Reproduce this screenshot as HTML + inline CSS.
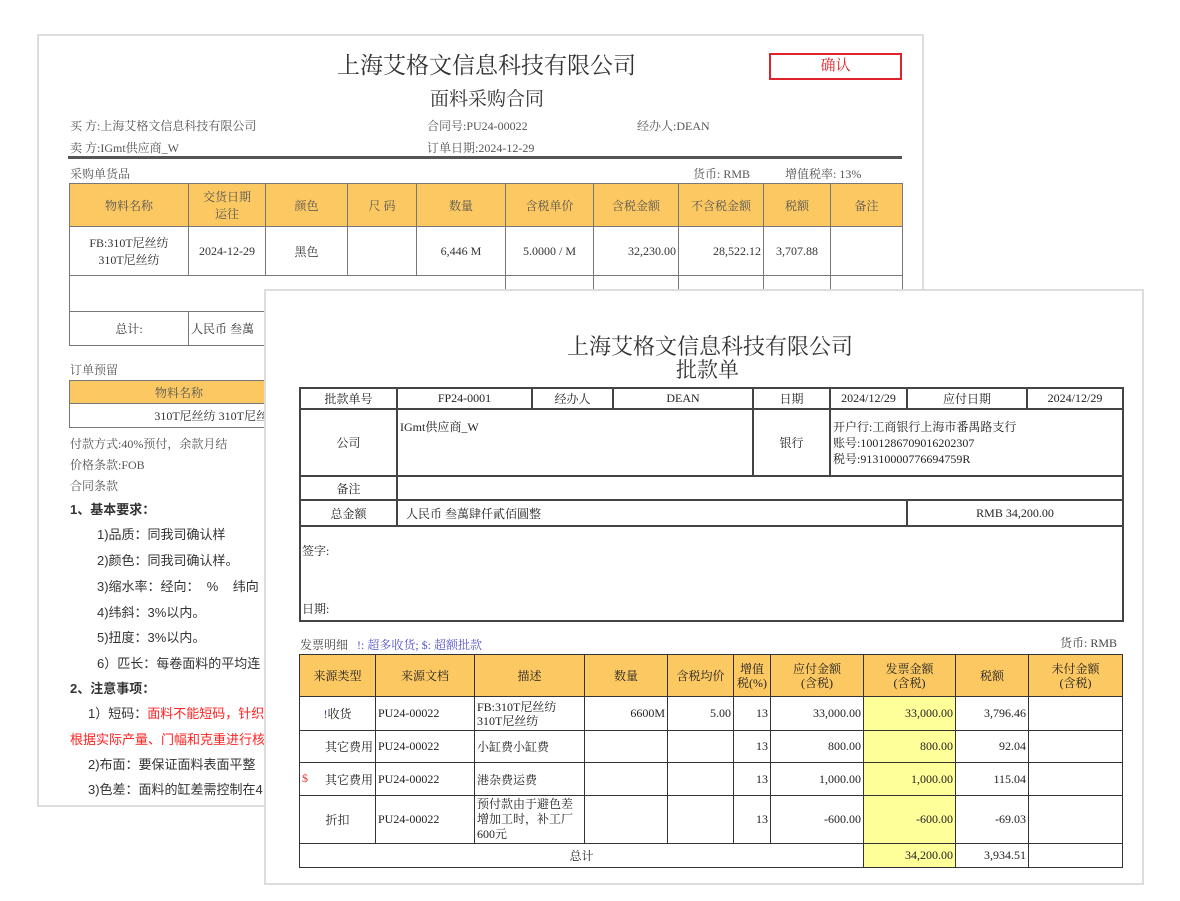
<!DOCTYPE html>
<html><head><meta charset="utf-8">
<style>
*{margin:0;padding:0;box-sizing:border-box}
body{width:1180px;height:901px;background:#fff;position:relative;overflow:hidden;font-family:"Liberation Serif","Noto Serif CJK SC",serif;color:#333}
.a{position:absolute;white-space:nowrap}
.doc{position:absolute;background:#fff;border:2px solid #ddd}
table{position:absolute;border-collapse:collapse;table-layout:fixed}
td{border:1px solid #777;text-align:center;font-size:12px;overflow:hidden;white-space:nowrap;padding:0 2px}
.h td{background:#fcc862;color:#555}
.bt td{border:2px solid #444;color:#222;font-size:12px}
.bt2 td{border:1.5px solid #333;color:#222;font-size:12px}
.r{text-align:right!important}
.l{text-align:left!important}
.y{background:#ffff99}
.s{font-size:12px;color:#555}
.k{font-family:"Liberation Sans","Noto Sans CJK SC",sans-serif;font-size:13px;color:#333}
</style></head><body>

<!-- back document -->
<div class="doc" style="left:37px;top:34px;width:887px;height:773px"></div>
<div class="a" style="left:337px;top:47px;font-size:23px;color:#333">上海艾格文信息科技有限公司</div>
<div class="a" style="left:430px;top:84px;font-size:19px;color:#333">面料采购合同</div>
<div class="a" style="left:769px;top:53px;width:133px;height:27px;border:2px solid #e0222a;color:#e0222a;text-align:center;font-size:15px;line-height:22px">确认</div>
<div class="a s" style="left:70px;top:117px">买 方:上海艾格文信息科技有限公司</div>
<div class="a s" style="left:427px;top:117px">合同号:PU24-00022</div>
<div class="a s" style="left:637px;top:117px">经办人:DEAN</div>
<div class="a s" style="left:70px;top:139px">卖 方:IGmt供应商_W</div>
<div class="a s" style="left:427px;top:139px">订单日期:2024-12-29</div>
<div class="a" style="left:68px;top:156px;width:834px;height:3px;background:#555"></div>
<div class="a s" style="left:70px;top:165px">采购单货品</div>
<div class="a s" style="left:693px;top:165px">货币: RMB</div>
<div class="a s" style="left:785px;top:165px">增值税率: 13%</div>

<table style="left:69px;top:183px;width:833px">
<colgroup><col style="width:119px"><col style="width:77px"><col style="width:82px"><col style="width:69px"><col style="width:89px"><col style="width:88px"><col style="width:85px"><col style="width:85px"><col style="width:67px"><col style="width:72px"></colgroup>
<tr class="h" style="height:43px"><td>物料名称</td><td>交货日期<br>运往</td><td>颜色</td><td>尺 码</td><td>数量</td><td>含税单价</td><td>含税金额</td><td>不含税金额</td><td>税额</td><td>备注</td></tr>
<tr style="height:49px"><td>FB:310T尼丝纺<br>310T尼丝纺</td><td>2024-12-29</td><td>黑色</td><td></td><td>6,446 M</td><td>5.0000 / M</td><td class="r">32,230.00</td><td class="r">28,522.12</td><td>3,707.88</td><td></td></tr>
<tr style="height:36px"><td colspan="5"></td><td></td><td></td><td></td><td></td><td></td></tr>
<tr style="height:34px"><td>总计:</td><td colspan="9" class="l">人民币 叁萬</td></tr>
</table>

<div class="a s" style="left:70px;top:361px">订单预留</div>
<table style="left:69px;top:380px;width:220px">
<tr class="h" style="height:23px"><td>物料名称</td></tr>
<tr style="height:24px"><td class="r" style="padding-right:8px">310T尼丝纺 310T尼丝纺</td></tr>
</table>
<div class="a s" style="left:70px;top:435px">付款方式:40%预付，余款月结</div>
<div class="a s" style="left:70px;top:456px">价格条款:FOB</div>
<div class="a s" style="left:70px;top:477px">合同条款</div>
<div class="a k" style="left:70px;top:499px;font-weight:bold">1、基本要求：</div>
<div class="a k" style="left:97px;top:524px">1)品质：同我司确认样</div>
<div class="a k" style="left:97px;top:550px">2)颜色：同我司确认样。</div>
<div class="a k" style="left:97px;top:576px">3)缩水率：经向：&nbsp; %&nbsp;&nbsp;&nbsp;&nbsp;纬向</div>
<div class="a k" style="left:97px;top:602px">4)纬斜：3%以内。</div>
<div class="a k" style="left:97px;top:627px">5)扭度：3%以内。</div>
<div class="a k" style="left:97px;top:653px">6）匹长：每卷面料的平均连</div>
<div class="a k" style="left:70px;top:678px;font-weight:bold">2、注意事项：</div>
<div class="a k" style="left:88px;top:703px">1）短码：<span style="color:#f22">面料不能短码，针织</span></div>
<div class="a k" style="left:70px;top:729px;color:#f22">根据实际产量、门幅和克重进行核</div>
<div class="a k" style="left:88px;top:754px">2)布面：要保证面料表面平整</div>
<div class="a k" style="left:88px;top:779px">3)色差：面料的缸差需控制在4</div>

<!-- front document -->
<div class="doc" style="left:264px;top:289px;width:880px;height:596px"></div>
<div class="a" style="left:567px;top:330px;font-size:22px;color:#333">上海艾格文信息科技有限公司</div>
<div class="a" style="left:676px;top:354px;font-size:21px;color:#333">批款单</div>

<table class="bt" style="left:299px;top:387px;width:823px">
<colgroup><col style="width:97px"><col style="width:135px"><col style="width:81px"><col style="width:140px"><col style="width:77px"><col style="width:77px"><col style="width:120px"><col style="width:96px"></colgroup>
<tr style="height:21px"><td>批款单号</td><td>FP24-0001</td><td>经办人</td><td>DEAN</td><td>日期</td><td>2024/12/29</td><td>应付日期</td><td>2024/12/29</td></tr>
<tr style="height:67px"><td>公司</td><td colspan="3" class="l" style="vertical-align:top;padding-top:8px">IGmt供应商_W</td><td>银行</td><td colspan="3" class="l" style="line-height:16px">开户行:工商银行上海市番禺路支行<br>账号:1001286709016202307<br>税号:91310000776694759R</td></tr>
<tr style="height:24px"><td>备注</td><td colspan="7"></td></tr>
<tr style="height:26px"><td>总金额</td><td colspan="5" class="l" style="padding-left:8px">人民币 叁萬肆仟貳佰圓整</td><td colspan="2">RMB 34,200.00</td></tr>
<tr style="height:95px"><td colspan="8"></td></tr>
</table>
<div class="a" style="left:302px;top:542px;font-size:12px;color:#222">签字:</div>
<div class="a" style="left:302px;top:600px;font-size:12px;color:#222">日期:</div>

<div class="a" style="left:300px;top:636px;font-size:12px;color:#444">发票明细</div>
<div class="a" style="left:357px;top:636px;font-size:12px;color:#55c">!: 超多收货; $: 超额批款</div>
<div class="a" style="left:1060px;top:634px;font-size:12px;color:#444">货币: RMB</div>

<table class="bt2" style="left:299px;top:654px;width:823px">
<colgroup><col style="width:76px"><col style="width:99px"><col style="width:110px"><col style="width:83px"><col style="width:66px"><col style="width:37px"><col style="width:93px"><col style="width:92px"><col style="width:73px"><col style="width:94px"></colgroup>
<tr class="h" style="height:42px"><td>来源类型</td><td>来源文档</td><td>描述</td><td>数量</td><td>含税均价</td><td style="line-height:14px">增值<br>税(%)</td><td style="line-height:14px">应付金额<br>(含税)</td><td style="line-height:14px">发票金额<br>(含税)</td><td>税额</td><td style="line-height:14px">未付金额<br>(含税)</td></tr>
<tr style="height:34px"><td><span style="color:#33c">!</span>收货</td><td class="l">PU24-00022</td><td class="l" style="line-height:14px">FB:310T尼丝纺<br>310T尼丝纺</td><td class="r">6600M</td><td class="r">5.00</td><td class="r">13</td><td class="r">33,000.00</td><td class="r y">33,000.00</td><td class="r">3,796.46</td><td></td></tr>
<tr style="height:32px"><td class="r">其它费用</td><td class="l">PU24-00022</td><td class="l">小缸费小缸费</td><td></td><td></td><td class="r">13</td><td class="r">800.00</td><td class="r y">800.00</td><td class="r">92.04</td><td></td></tr>
<tr style="height:33px"><td class="r"><span style="color:#e33;float:left">$</span>其它费用</td><td class="l">PU24-00022</td><td class="l">港杂费运费</td><td></td><td></td><td class="r">13</td><td class="r">1,000.00</td><td class="r y">1,000.00</td><td class="r">115.04</td><td></td></tr>
<tr style="height:48px"><td>折扣</td><td class="l">PU24-00022</td><td class="l" style="line-height:15px;white-space:normal">预付款由于避色差增加工时，补工厂600元</td><td></td><td></td><td class="r">13</td><td class="r">-600.00</td><td class="r y">-600.00</td><td class="r">-69.03</td><td></td></tr>
<tr style="height:24px"><td colspan="7">总计</td><td class="r y">34,200.00</td><td class="r">3,934.51</td><td></td></tr>
</table>
</body></html>
